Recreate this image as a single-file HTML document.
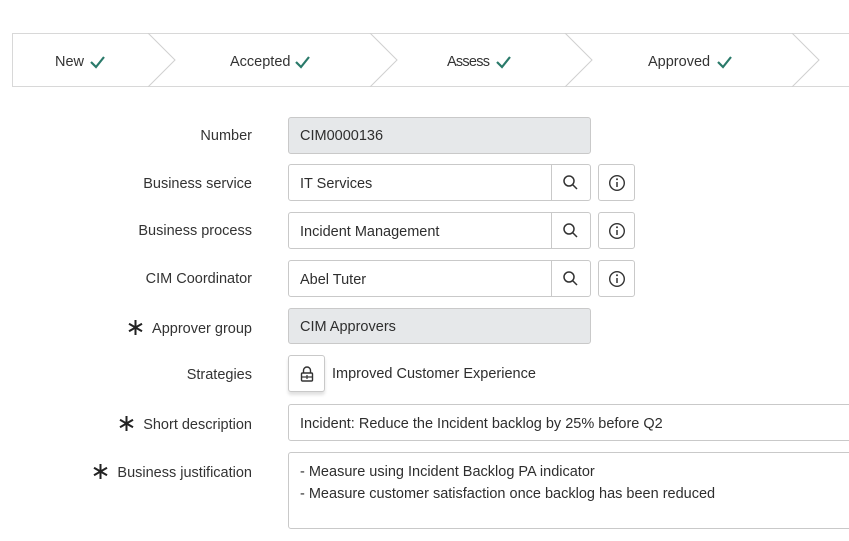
<!DOCTYPE html>
<html><head><style>
body{margin:0;width:849px;height:541px;background:#fff;font-family:"Liberation Sans",sans-serif;color:#2e2e2e;position:relative;overflow:hidden;font-size:14.5px}
.abs{position:absolute}
.lbl{position:absolute;right:597px;text-align:right;font-size:14.5px;color:#333}
.inp{position:absolute;left:288px;height:35px;border:1px solid #c9c9c9;border-radius:3px;box-sizing:border-box;padding-left:11px;line-height:35px;background:#fff}
.ro{background:#e6e8ea;width:303px}
.btn{position:absolute;width:37px;height:37px;border:1px solid #c9c9c9;border-radius:3px;box-sizing:border-box;background:#fff;display:flex;align-items:center;justify-content:center}
.star{display:inline-block;width:17px;height:17px;vertical-align:-3px;margin-right:8px}
</style></head><body>
<div class="abs" style="left:12px;top:33px;width:850px;height:54px;border:1px solid #d8d8d8;border-right:none;box-sizing:border-box"></div>
<svg class="abs" style="left:0;top:33px" width="849" height="54">
<g fill="none" stroke="#d0d0d0" stroke-width="1">
<polyline points="148,0 175,27 148,54"/>
<polyline points="370,0 397,27 370,54"/>
<polyline points="565,0 592,27 565,54"/>
<polyline points="792,0 819,27 792,54"/>
</g>
<g fill="none" stroke="#2a7a6a" stroke-width="2.2">
<polyline points="91,29 96,34 104,24"/>
<polyline points="296,29 301,34 309,24"/>
<polyline points="497,29 502,34 510,24"/>
<polyline points="718,29 723,34 731,24"/>
</g>
<g font-family="Liberation Sans" font-size="14.5" fill="#333">
<text x="55" y="33">New</text>
<text x="230" y="33">Accepted</text>
<text x="447" y="33" textLength="43">Assess</text>
<text x="648" y="33">Approved</text>
</g>
</svg>

<div class="lbl" style="top:128px">Number</div>
<div class="inp ro" style="top:117px;height:37px;line-height:37px">CIM0000136</div>

<div class="lbl" style="top:176px">Business service</div>
<div class="inp" style="top:164px;width:303px;height:37px;line-height:38px">IT Services</div>
<div class="lbl" style="top:223px">Business process</div>
<div class="inp" style="top:212px;width:303px;height:37px;line-height:38px">Incident Management</div>
<div class="lbl" style="top:271px">CIM Coordinator</div>
<div class="inp" style="top:260px;width:303px;height:37px;line-height:38px">Abel Tuter</div>

<svg class="abs" style="left:551px;top:164px" width="90" height="133">
<g stroke="#c9c9c9" fill="none"><line x1="0.5" y1="0" x2="0.5" y2="37"/><line x1="0.5" y1="48" x2="0.5" y2="85"/><line x1="0.5" y1="96" x2="0.5" y2="133"/></g>
<g stroke="#333" stroke-width="1.5" fill="none">
<circle cx="18" cy="17" r="5"/><line x1="21.5" y1="20.5" x2="26" y2="25"/>
<circle cx="18" cy="65" r="5"/><line x1="21.5" y1="68.5" x2="26" y2="73"/>
<circle cx="18" cy="113" r="5"/><line x1="21.5" y1="116.5" x2="26" y2="121"/>
</g>
</svg>
<div class="btn" style="left:598px;top:164px"><svg width="18" height="18"><circle cx="9" cy="9" r="7.3" fill="none" stroke="#333" stroke-width="1.4"/><line x1="9" y1="8" x2="9" y2="13" stroke="#333" stroke-width="1.5"/><circle cx="9" cy="5.3" r="1" fill="#333"/></svg></div>
<div class="btn" style="left:598px;top:212px"><svg width="18" height="18"><circle cx="9" cy="9" r="7.3" fill="none" stroke="#333" stroke-width="1.4"/><line x1="9" y1="8" x2="9" y2="13" stroke="#333" stroke-width="1.5"/><circle cx="9" cy="5.3" r="1" fill="#333"/></svg></div>
<div class="btn" style="left:598px;top:260px"><svg width="18" height="18"><circle cx="9" cy="9" r="7.3" fill="none" stroke="#333" stroke-width="1.4"/><line x1="9" y1="8" x2="9" y2="13" stroke="#333" stroke-width="1.5"/><circle cx="9" cy="5.3" r="1" fill="#333"/></svg></div>

<div class="lbl" style="top:319px"><svg class="star" viewBox="0 0 17 17"><g stroke="#222" stroke-width="2"><line x1="8.5" y1="1" x2="8.5" y2="16"/><line x1="2" y1="4.7" x2="15" y2="12.3"/><line x1="2" y1="12.3" x2="15" y2="4.7"/></g></svg>Approver group</div>
<div class="inp ro" style="top:308px;height:36px;line-height:37px">CIM Approvers</div>

<div class="lbl" style="top:367px">Strategies</div>
<div class="btn" style="left:288px;top:355px;box-shadow:0 3px 3px rgba(0,0,0,0.12)"><svg width="16" height="18"><path d="M4.5 8V5.5a3.5 3.5 0 0 1 7 0V8" fill="none" stroke="#333" stroke-width="1.4"/><rect x="2.5" y="8" width="11" height="8" rx="1" fill="none" stroke="#333" stroke-width="1.4"/><line x1="2.5" y1="12" x2="13.5" y2="12" stroke="#333" stroke-width="1.2"/><line x1="8" y1="10" x2="8" y2="14" stroke="#333" stroke-width="1.2"/></svg></div>
<div class="abs" style="left:332px;top:366px">Improved Customer Experience</div>

<div class="lbl" style="top:415px"><svg class="star" viewBox="0 0 17 17"><g stroke="#222" stroke-width="2"><line x1="8.5" y1="1" x2="8.5" y2="16"/><line x1="2" y1="4.7" x2="15" y2="12.3"/><line x1="2" y1="12.3" x2="15" y2="4.7"/></g></svg>Short description</div>
<div class="inp" style="top:404px;width:600px;height:37px;line-height:38px">Incident: Reduce the Incident backlog by 25% before Q2</div>

<div class="lbl" style="top:463px"><svg class="star" viewBox="0 0 17 17"><g stroke="#222" stroke-width="2"><line x1="8.5" y1="1" x2="8.5" y2="16"/><line x1="2" y1="4.7" x2="15" y2="12.3"/><line x1="2" y1="12.3" x2="15" y2="4.7"/></g></svg>Business justification</div>
<div class="inp" style="top:452px;width:600px;height:77px;line-height:22px;padding-top:8px">- Measure using Incident Backlog PA indicator<br>- Measure customer satisfaction once backlog has been reduced</div>
</body></html>
